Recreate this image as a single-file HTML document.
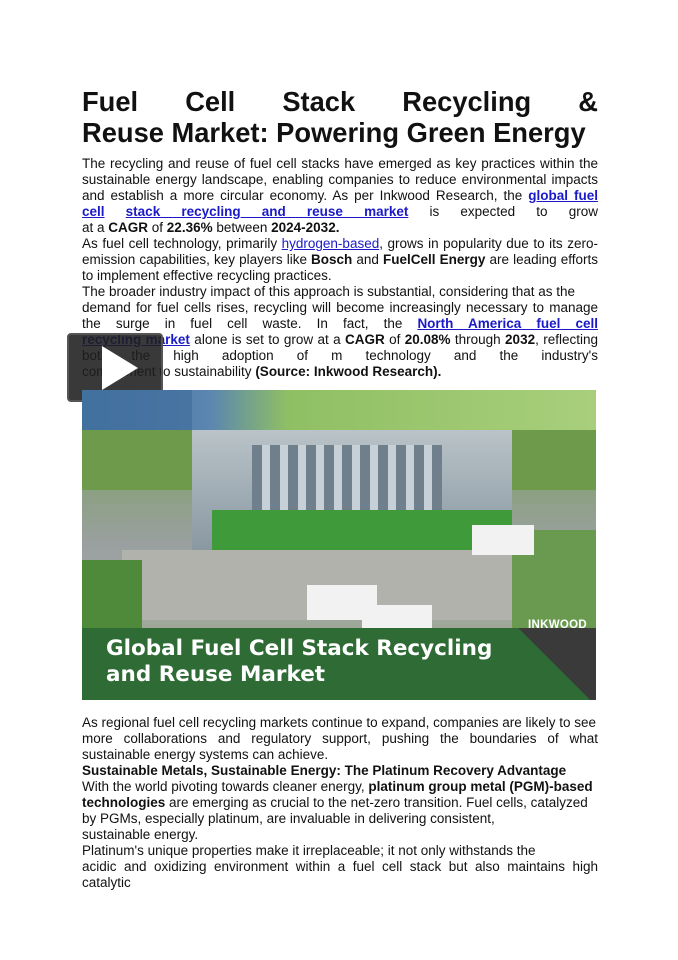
<!DOCTYPE html>
<html><head><meta charset="utf-8"><style>
html,body{margin:0;padding:0;background:#fff;}
body{width:678px;height:960px;position:relative;overflow:hidden;font-family:"Liberation Sans",Arial,sans-serif;color:#111;}
.t{position:absolute;left:82px;width:516px;font-weight:bold;font-size:27.3px;line-height:31px;white-space:nowrap;}
.l{position:absolute;left:82px;width:516px;font-size:13.5px;line-height:16px;white-space:nowrap;}
.j{text-align:justify;text-align-last:justify;}
a{color:#1a1ac8;text-decoration:underline;}
b{font-weight:bold;}
.img{position:absolute;left:82px;top:390px;width:514px;height:310px;overflow:hidden;
background:linear-gradient(180deg,#9cc27a 0%,#6d9a52 18%,#8aa07e 30%,#9aa0a0 50%,#a7aaa6 70%,#7d9a6a 100%);}
</style></head><body>

<div class="t j" style="top:86px">Fuel Cell Stack Recycling &amp;</div>
<div class="t" style="top:117px">Reuse Market: Powering Green Energy</div>

<div class="l j" style="top:156px">The recycling and reuse of fuel cell stacks have emerged as key practices within the</div>
<div class="l j" style="top:172px">sustainable energy landscape, enabling companies to reduce environmental impacts</div>
<div class="l j" style="top:188px">and establish a more circular economy. As per Inkwood Research, the <a><b>global fuel</b></a></div>
<div class="l j" style="top:204px"><a><b>cell</b></a> <a><b>stack recycling and reuse market</b></a> is expected to grow</div>
<div class="l" style="top:220px">at a <b>CAGR</b> of <b>22.36%</b> between <b>2024-2032.</b></div>
<div class="l j" style="top:236px">As fuel cell technology, primarily <a>hydrogen-based</a>, grows in popularity due to its zero-</div>
<div class="l j" style="top:252px">emission capabilities, key players like <b>Bosch</b> and <b>FuelCell Energy</b> are leading efforts</div>
<div class="l" style="top:268px">to implement effective recycling practices.</div>
<div class="l" style="top:284px">The broader industry impact of this approach is substantial, considering that as the</div>
<div class="l j" style="top:300px">demand for fuel cells rises, recycling will become increasingly necessary to manage</div>
<div class="l j" style="top:316px">the surge in fuel cell waste. In fact, the <a><b>North America fuel cell</b></a></div>
<div class="l j" style="top:332px"><a><b>recycling market</b></a> alone is set to grow at a <b>CAGR</b> of <b>20.08%</b> through <b>2032</b>, reflecting</div>
<div class="l j" style="top:348px">both the high adoption of m technology and the industry's</div>
<div class="l" style="top:364px">commitment to sustainability <b>(Source: Inkwood Research).</b></div>

<div style="position:absolute;left:67px;top:333px;width:96px;height:69px;background:rgba(30,30,30,0.88);border:2px solid #555;border-radius:4px;box-sizing:border-box;"></div>
<svg style="position:absolute;left:100px;top:344px" width="40" height="48"><polygon points="2,2 38,24 2,46" fill="#fff"/></svg>

<div class="img">
 <div style="position:absolute;left:0;top:0;width:514px;height:40px;background:linear-gradient(90deg,#3d6fa5 0,#5b86b0 25%,#8fbf64 40%,#a9cf7c 100%)"></div>
 <div style="position:absolute;left:0;top:0;width:110px;height:70px;background:#44709e;opacity:.8"></div>
 <div style="position:absolute;left:0;top:40px;width:514px;height:60px;background:#6e9a4c"></div>
 <div style="position:absolute;left:110px;top:40px;width:320px;height:120px;background:linear-gradient(180deg,#b9c3c8,#8a98a2);"></div>
 <div style="position:absolute;left:170px;top:55px;width:190px;height:75px;background:repeating-linear-gradient(90deg,#6f7f8b 0 10px,#c7d0d6 10px 18px)"></div>
 <div style="position:absolute;left:130px;top:120px;width:300px;height:40px;background:#3f9a3a"></div>
 <div style="position:absolute;left:40px;top:160px;width:440px;height:70px;background:#b2b2ad"></div>
 <div style="position:absolute;left:0;top:170px;width:60px;height:70px;background:#4f8a3a"></div>
 <div style="position:absolute;left:430px;top:140px;width:84px;height:100px;background:#6a9a50"></div>
 <div style="position:absolute;left:390px;top:135px;width:62px;height:30px;background:#f2f2f2"></div>
 <div style="position:absolute;left:225px;top:195px;width:70px;height:35px;background:#f2f2f2"></div>
 <div style="position:absolute;left:280px;top:215px;width:70px;height:25px;background:#f2f2f2"></div>
 <div style="position:absolute;left:0;top:238px;width:514px;height:72px;background:#2f6b34"></div>
 <div style="position:absolute;left:430px;top:238px;width:84px;height:72px;background:linear-gradient(225deg,#3a3a3a 0,#3a3a3a 50%,transparent 50%)"></div>
 <div style="position:absolute;left:446px;top:229px;font-size:11.5px;font-weight:bold;color:#fff;letter-spacing:.3px">INKWOOD</div>
 <div style="position:absolute;left:24px;top:246px;font-size:21.5px;font-weight:bold;color:#fff;line-height:26px;font-family:'DejaVu Sans','Liberation Sans',sans-serif;">Global Fuel Cell Stack Recycling<br>and Reuse Market</div>
</div>

<div class="l" style="top:715px">As regional fuel cell recycling markets continue to expand, companies are likely to see</div>
<div class="l j" style="top:731px">more collaborations and regulatory support, pushing the boundaries of what</div>
<div class="l" style="top:747px">sustainable energy systems can achieve.</div>
<div class="l" style="top:763px"><b>Sustainable Metals, Sustainable Energy: The Platinum Recovery Advantage</b></div>
<div class="l" style="top:779px">With the world pivoting towards cleaner energy, <b>platinum group metal (PGM)-based</b></div>
<div class="l" style="top:795px"><b>technologies</b> are emerging as crucial to the net-zero transition. Fuel cells, catalyzed</div>
<div class="l" style="top:811px">by PGMs, especially platinum, are invaluable in delivering consistent,</div>
<div class="l" style="top:827px">sustainable energy.</div>
<div class="l" style="top:843px">Platinum's unique properties make it irreplaceable; it not only withstands the</div>
<div class="l j" style="top:859px">acidic and oxidizing environment within a fuel cell stack but also maintains high</div>
<div class="l" style="top:875px">catalytic</div>

</body></html>
